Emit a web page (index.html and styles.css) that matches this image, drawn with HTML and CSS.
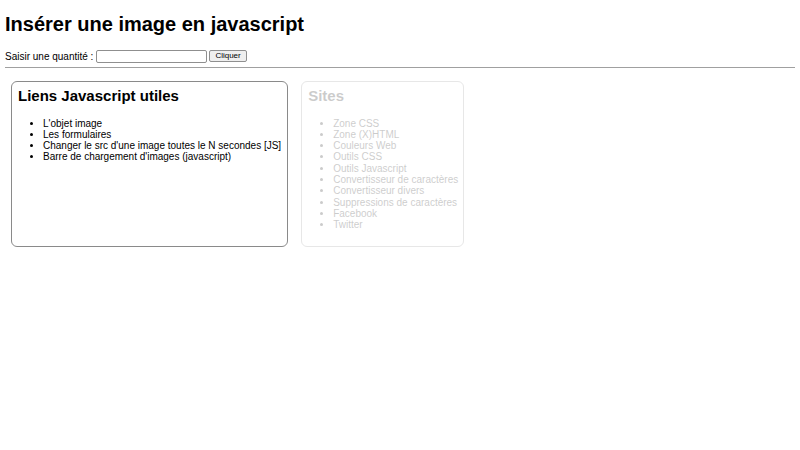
FILE: index.html
```html
<!DOCTYPE html>
<html lang="fr">
<head>
<meta charset="utf-8">
<title>Insérer une image en javascript</title>
<link rel="stylesheet" href="styles.css">
</head>
<body>
<h1 class="title">Insérer une image en javascript</h1>
<form class="form">
  <label class="label" for="qte">Saisir une quantité :</label>
  <input class="field" id="qte" type="text">
  <button class="btn" type="button">Cliquer</button>
</form>
<hr class="rule">
<div class="boxes">
  <section class="box">
    <h2 class="box-title">Liens Javascript utiles</h2>
    <ul class="links">
      <li>L'objet image</li>
      <li>Les formulaires</li>
      <li>Changer le src d'une image toutes le N secondes [JS]</li>
      <li>Barre de chargement d'images (javascript)</li>
    </ul>
  </section>
  <section class="box box-faded">
    <h2 class="box-title">Sites</h2>
    <ul class="links">
      <li>Zone CSS</li>
      <li>Zone (X)HTML</li>
      <li>Couleurs Web</li>
      <li>Outils CSS</li>
      <li>Outils Javascript</li>
      <li>Convertisseur de caractères</li>
      <li>Convertisseur divers</li>
      <li>Suppressions de caractères</li>
      <li>Facebook</li>
      <li>Twitter</li>
    </ul>
  </section>
</div>
</body>
</html>
```
FILE: styles.css
```css
html, body {
  background: #fff;
}
body {
  margin: 0 5px;
  padding-top: 13px;
  font-family: "Liberation Sans", Arial, sans-serif;
  font-size: 10px;
  color: #000;
}
.title {
  margin: 0 0 13px;
  font-size: 20px;
  font-weight: bold;
  line-height: 23px;
}
.form {
  display: flex;
  align-items: center;
  height: 14px;
  margin: 0;
}
.label {
  margin-right: 3px;
}
.field {
  box-sizing: border-box;
  width: 111px;
  height: 13px;
  margin: 0;
  padding: 0 2px;
  border: 1px solid #8f8f8f;
  border-radius: 2px;
  background: #fff;
  font: 8px "Liberation Sans", Arial, sans-serif;
}
.btn {
  box-sizing: border-box;
  height: 12px;
  margin: 0 0 0 2px;
  padding: 0 5px;
  border: 1px solid #8f8f8f;
  border-radius: 2px;
  background: #efefef;
  font: 8px "Liberation Sans", Arial, sans-serif;
  line-height: 10px;
  color: #000;
}
.rule {
  height: 0;
  margin: 4px 0 13px;
  border: 0;
  border-top: 1px solid #a0a0a0;
}
.boxes {
  display: flex;
  align-items: stretch;
  gap: 13px;
  padding-left: 6px;
}
.box {
  box-sizing: border-box;
  flex: none;
  padding: 5px 6px 6px;
  border: 1px solid #8a8a8a;
  border-radius: 6px;
}
.box-faded {
  padding-right: 5px;
  opacity: 0.2;
}
.box-title {
  margin: 0;
  font-size: 15px;
  line-height: 17px;
  font-weight: bold;
}
.links {
  margin: 13.5px 0 10px;
  padding-left: 25px;
  line-height: 11.3px;
  white-space: nowrap;
}
```
